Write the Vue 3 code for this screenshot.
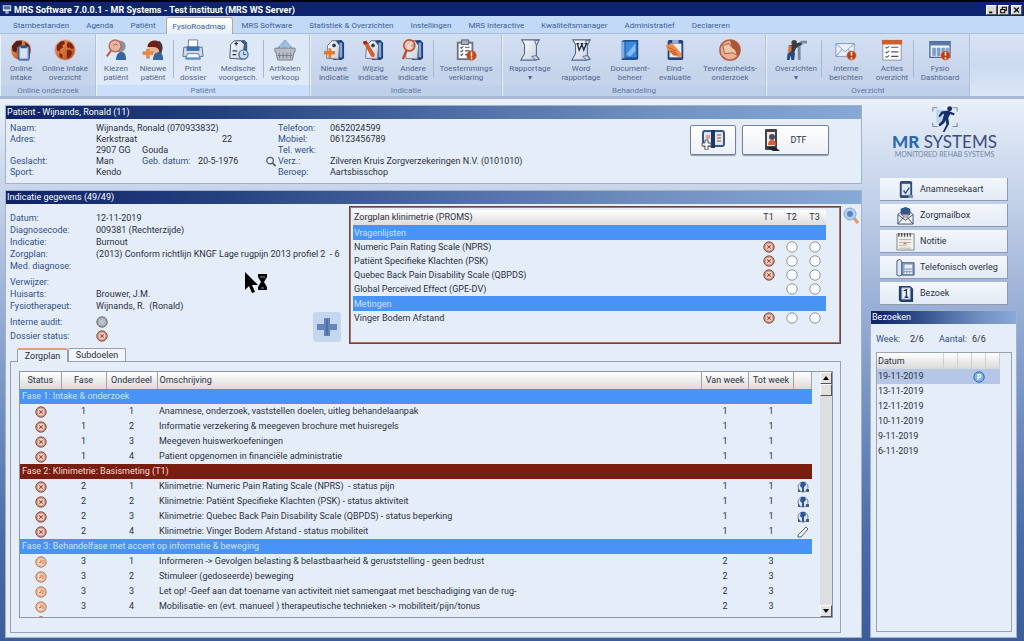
<script setup>
const menu = ['Stambestanden', 'Agenda', 'Patiënt', 'FysioRoadmap', 'MRS Software', 'Statistiek & Overzichten', 'Instellingen', 'MRS Interactive', 'Kwaliteitsmanager', 'Administratief', 'Declareren']

const groups = [
  { name: 'Online onderzoek', items: [
    { l: ['Online', 'intake'], icon: 'globe-clip', w: 34 }, { l: ['Online intake', 'overzicht'], icon: 'globe', w: 54 }] },
  { name: 'Patiënt', hot: true, items: [
    { l: ['Kiezen', 'patiënt'], icon: 'person-search', w: 32 }, { l: ['Nieuwe', 'patiënt'], icon: 'person-add', w: 42, sep: true },
    { l: ['Print', 'dossier'], icon: 'printer', w: 38 }, { l: ['Medische', 'voorgesch.'], icon: 'record', w: 52, sep: true },
    { l: ['Artikelen', 'verkoop'], icon: 'basket', w: 42 }] },
  { name: 'Indicatie', items: [
    { l: ['Nieuwe', 'indicatie'], icon: 'ind-new', w: 40 }, { l: ['Wijzig', 'indicatie'], icon: 'ind-edit', w: 38 },
    { l: ['Andere', 'indicatie'], icon: 'ind-other', w: 42, sep: true }, { l: ['Toestemmings', 'verklaring'], icon: 'consent', w: 64 }] },
  { name: 'Behandeling', items: [
    { l: ['Rapportage', '▾'], icon: 'scroll', w: 48 }, { l: ['Word', 'rapportage'], icon: 'scroll-w', w: 54 },
    { l: ['Document-', 'beheer'], icon: 'book', w: 44 }, { l: ['Eind-', 'evaluatie'], icon: 'eval', w: 46 },
    { l: ['Tevredenheids-', 'onderzoek'], icon: 'thumb', w: 64 }] },
  { name: 'Overzicht', items: [
    { l: ['Overzichten', '▾'], icon: 'trainer', w: 52, sep: true }, { l: ['Interne', 'berichten'], icon: 'mail', w: 48 },
    { l: ['Acties', 'overzicht'], icon: 'actions', w: 44, sep: true }, { l: ['Fysio', 'Dashboard'], icon: 'dash', w: 52 }] },
]

const proms = [
  { head: 'Vragenlijsten' },
  { name: 'Numeric Pain Rating Scale (NPRS)', done: true },
  { name: 'Patiënt Specifieke Klachten (PSK)', done: true },
  { name: 'Quebec Back Pain Disability Scale (QBPDS)', done: true },
  { name: 'Global Perceived Effect (GPE-DV)', done: false },
  { head: 'Metingen' },
  { name: 'Vinger Bodem Afstand', done: true },
]

const plan = [
  { head: 'Fase 1: Intake & onderzoek' },
  { s: 'st-x', f: 1, o: 1, t: 'Anamnese, onderzoek, vaststellen doelen, uitleg behandelaanpak', a: 1, b: 1 },
  { s: 'st-x', f: 1, o: 2, t: 'Informatie verzekering & meegeven brochure met huisregels', a: 1, b: 1 },
  { s: 'st-x', f: 1, o: 3, t: 'Meegeven huiswerkoefeningen', a: 1, b: 1 },
  { s: 'st-x', f: 1, o: 4, t: 'Patient opgenomen in financiële administratie', a: 1, b: 1 },
  { head: 'Fase 2: Klinimetrie: Basismeting (T1)', red: true },
  { s: 'st-x', f: 2, o: 1, t: 'Klinimetrie: Numeric Pain Rating Scale (NPRS)  - status pijn', a: 1, b: 1, i: 'globe-s' },
  { s: 'st-x', f: 2, o: 2, t: 'Klinimetrie: Patiënt Specifieke Klachten (PSK) - status aktiviteit', a: 1, b: 1, i: 'globe-s' },
  { s: 'st-x', f: 2, o: 3, t: 'Klinimetrie: Quebec Back Pain Disability Scale (QBPDS) - status beperking', a: 1, b: 1, i: 'globe-s' },
  { s: 'st-x', f: 2, o: 4, t: 'Klinimetrie: Vinger Bodem Afstand - status mobiliteit', a: 1, b: 1, i: 'ruler' },
  { head: 'Fase 3: Behandelfase met accent op informatie & beweging' },
  { s: 'st-o', f: 3, o: 1, t: 'Informeren -> Gevolgen belasting & belastbaarheid & geruststelling - geen bedrust', a: 2, b: 3 },
  { s: 'st-o', f: 3, o: 2, t: 'Stimuleer (gedoseerde) beweging', a: 2, b: 3 },
  { s: 'st-o', f: 3, o: 3, t: 'Let op! -Geef aan dat toename van activiteit niet samengaat met beschadiging van de rug-', a: 2, b: 3 },
  { s: 'st-o', f: 3, o: 4, t: 'Mobilisatie- en (evt. manueel ) therapeutische technieken -> mobiliteit/pijn/tonus', a: 2, b: 3 },
  { s: 'st-x', f: '', o: '', t: '', a: '', b: '' },
]

const actions = [
  { t: 'Anamnesekaart', icon: 'a-card' }, { t: 'Zorgmailbox', icon: 'a-mail' }, { t: 'Notitie', icon: 'a-note' },
  { t: 'Telefonisch overleg', icon: 'a-phone' }, { t: 'Bezoek', icon: 'a-visit' },
]
const visits = ['19-11-2019', '13-11-2019', '12-11-2019', '10-11-2019', '9-11-2019', '6-11-2019']
</script>

<template>
  <svg class="defs" aria-hidden="true">
    <defs>
      <linearGradient id="gOrange" x1="0" y1="0" x2="1" y2="1"><stop offset="0" stop-color="#f39a55" /><stop offset="1" stop-color="#b04a1e" /></linearGradient>
      <linearGradient id="gPaper" x1="0" y1="0" x2="1" y2="1"><stop offset="0" stop-color="#ffffff" /><stop offset="1" stop-color="#c3cede" /></linearGradient>
    </defs>
    <symbol id="globe" viewBox="0 0 24 24">
      <circle cx="12" cy="12" r="11" fill="url(#gOrange)" stroke="#c98a68" stroke-width=".6" />
      <path d="M3 7l4-4 4-1 1 3-3 2 1 2-3 2-1 3-3-2zM15 3l4 2 3 5-3 1-2-2-2 1-1-3zM14 12l4 0 2 3-2 4-3 3-1-4zM6 15l3 2 0 4-3-2z" fill="#7d2410" />
    </symbol>
    <symbol id="globe-clip" viewBox="0 0 24 24">
      <circle cx="12" cy="12" r="11" fill="url(#gOrange)" />
      <path d="M2 8l5-6 6 0 0 4-5 3-1 6-4-2zM16 3l5 4 1 6-4-2z" fill="#542018" />
      <rect x="9" y="8" width="12" height="15" rx="1.5" fill="#7ba0d2" stroke="#24447f" /><rect x="11" y="10" width="8" height="11" fill="#d7e4f5" /><path d="M12 7h6v3h-6z" fill="#33527f" />
    </symbol>
    <symbol id="person-search" viewBox="0 0 24 24">
      <path d="M12 23c0-6 3-9 6-9s5 3 5 9z" fill="#3565a5" /><circle cx="16" cy="8" r="6.500" fill="#8b90a0" />
      <circle cx="11" cy="7.500" r="6.500" fill="#e9b5a2" stroke="#b8705c" stroke-width="1.600" /><path d="M7 12l-5 7" stroke="#c45a32" stroke-width="2.200" /><path d="M9 7q2-3 5 0" fill="none" stroke="#995d50" />
    </symbol>
    <symbol id="person-add" viewBox="0 0 24 24">
      <path d="M12 23c0-6 3-9 6-9s5 3 5 9z" fill="#3565a5" /><circle cx="14" cy="9" r="6.500" fill="#e9b48f" /><path d="M6 9c0-10 17-10 16 2l-3 4c0-5-3-7-13-6z" fill="#702016" /><path d="M18 3q5 4 2 12" fill="none" stroke="#3c3c48" stroke-width="2.500" />
      <path d="M5 11h3v3h4v3H8v4H5v-4H1v-3h4z" fill="#f08a3c" stroke="#cf6425" stroke-width=".5" />
    </symbol>
    <symbol id="printer" viewBox="0 0 24 24">
      <path d="M7 1h10v10H7z" fill="#fff" stroke="#667896" /><path d="M2 9h20l1 10H1z" fill="#d2dae8" stroke="#57698a" /><path d="M5 8h14v5H5z" fill="#3d6fae" /><path d="M6 16h12l2 6H4z" fill="#fafdff" stroke="#5277ab" /><path d="M4 20h16v2H4z" fill="#5590da" />
    </symbol>
    <symbol id="record" viewBox="0 0 24 24">
      <path d="M8 2l11-1 3 3v14l-4 3H9z" fill="#3e5d8d" /><path d="M4 6l4-4h7l4 4-2 16-14-1z" fill="url(#gPaper)" stroke="#465064" /><path d="M8 5h4M10 3v4M6 13h5M6 17h4" stroke="#283c64" stroke-width="1.500" /><circle cx="18" cy="17" r="5" fill="#c8dbf0" stroke="#3d67a4" stroke-width="1.300" /><path d="M18 14v3h3" stroke="#315b98" fill="none" />
    </symbol>
    <symbol id="basket" viewBox="0 0 24 24">
      <path d="M4 11L12 2l8 9" fill="none" stroke="#7895c1" stroke-width="2" /><path d="M5 8l7-6 7 6-7 3z" fill="#9bbadf" /><path d="M1 10h22v4h-1l-2 9H4l-2-9H1z" fill="#b7bcc5" stroke="#777d88" /><path d="M6 15v6M10 15v6M14 15v6M18 15v6M4 18h16" stroke="#777d88" />
    </symbol>
    <symbol id="ind-base" viewBox="0 0 24 24">
      <path d="M9 2l11-1 3 3v17l-3 2h-9z" fill="#1d3f7a" /><path d="M18 4h3v16h-3z" fill="#87a9da" /><path d="M5 7l5-5h4l4 5-1 15-13-1z" fill="url(#gPaper)" stroke="#6e7380" /><circle cx="12" cy="7" r="2" fill="#303c58" />
    </symbol>
    <symbol id="ind-new" viewBox="0 0 24 24"><use href="#ind-base" /><path d="M6 10h3v3h4v4H9v4H6v-4H1v-4h5z" fill="#ee752e" /></symbol>
    <symbol id="ind-edit" viewBox="0 0 24 24"><use href="#ind-base" /><path d="M1 3l4-1 9 15-1 3-3-1z" fill="#dc592b" /><path d="M1 3l4-1 1 3-4 1z" fill="#8b2b18" /></symbol>
    <symbol id="ind-other" viewBox="0 0 24 24"><use href="#ind-base" /><circle cx="8" cy="7" r="6" fill="#f2cbb9" fill-opacity=".75" stroke="#c4512c" stroke-width="1.800" /><path d="M5 12l-4 10" stroke="#c4512c" stroke-width="2.500" /></symbol>
    <symbol id="consent" viewBox="0 0 24 24">
      <rect x="2" y="3" width="18" height="20" fill="#6d737d" /><path d="M4 5h14v16H4z" fill="#fafafa" /><path d="M7 1h8v5H7z" fill="#a8afba" stroke="#4f5968" /><path d="M6 9l1 1 2-2M6 13l1 1 2-2M6 17l1 1 2-2M11 9h5M11 13h5M11 17h3" fill="none" stroke="#505866" stroke-width="1.200" /><circle cx="18" cy="18" r="5.500" fill="#c24c1d" /><path d="M18 14v5M18 20v2" stroke="#fff" stroke-width="1.500" />
    </symbol>
    <symbol id="scroll" viewBox="0 0 24 24"><path d="M3 1h19l-3 6v11l3 4-4 1H2l4-7V6z" fill="url(#gPaper)" stroke="#53698d" stroke-width="1.200" /><path d="M19 18l-5 1 4 4M22 1l-5 1 2 5" fill="none" stroke="#53698d" /></symbol>
    <symbol id="scroll-w" viewBox="0 0 24 24"><use href="#scroll" /><path d="M8 5l2 7 3-6 2 6 3-7M7 5h3M11.500 5h3M16 5h3" fill="none" stroke="#222c42" stroke-width="1.500" /></symbol>
    <symbol id="book" viewBox="0 0 24 24"><path d="M3 2l3-1h15v21l-3 1H3z" fill="#1d4f92" /><path d="M7 3h12v17H7z" fill="#3d8be0" /><path d="M8 17L18 5v8l-6 6z" fill="#89bbf0" /><path d="M3 3h3v18H3z" fill="#7faee2" /></symbol>
    <symbol id="eval" viewBox="0 0 24 24"><rect x="4" y="1" width="17" height="22" rx="2" fill="#23427a" /><path d="M6 5h13v15H6z" fill="#e7eef8" /><path d="M9 1h7v4H9z" fill="#9aaed0" /><path d="M2 7l7-2 4 4 6 7-1 4-8-2-6-6z" fill="#f08a46" /><path d="M4 9l9 4M6 13l7 2M9 16l6 1" stroke="#b64e20" /></symbol>
    <symbol id="thumb" viewBox="0 0 24 24"><circle cx="12" cy="12" r="11" fill="#e7b398" stroke="#b95d39" stroke-width="1.600" /><path d="M12 1a11 11 0 0 1 9 17l-6-4z" fill="#a8573a" /><path d="M4 7l7-2 3 4 4 3 2 6-5-3-9 1z" fill="#efc5aa" stroke="#a45737" /></symbol>
    <symbol id="trainer" viewBox="0 0 24 24"><circle cx="10" cy="4" r="3" fill="#493c3a" /><path d="M4 7l5-1 9-3 1 3-7 4-2 5-5 1z" fill="#343c4a" /><path d="M4 7h3v7H3z" fill="#e37535" /><path d="M3 15h8l-1 8H7l-1-5-1 5H2z" fill="#264b7e" /><path d="M14 8h3v15h-3zM17 2h7v3h-7z" fill="#7788a5" /></symbol>
    <symbol id="bang" viewBox="0 0 24 24"><circle cx="18" cy="18" r="5.200" fill="#b84014" stroke="#e6a184" stroke-width=".7" /><path d="M18 14v4M18 20v2" stroke="#fff" stroke-width="1.700" /></symbol>
    <symbol id="mail" viewBox="0 0 24 24"><path d="M1 5h20v14H1z" fill="#eaf1fa" stroke="#7896c5" /><path d="M1 5l10 9L21 5M1 19l7-8M21 19l-7-8" fill="none" stroke="#7896c5" /><use href="#bang" /></symbol>
    <symbol id="actions" viewBox="0 0 24 24"><path d="M2 2h20v21H2z" fill="#fff" stroke="#8e8e93" /><path d="M1 1h22v5H1z" fill="#cb602f" /><path d="M5 9l1 1 3-2M5 14l1 1 3-2M5 19l1 1 3-2M11 9h8M11 14h8M11 19h8" fill="none" stroke="#515862" stroke-width="1.200" /></symbol>
    <symbol id="dash" viewBox="0 0 24 24"><path d="M1 3h22v17H1z" fill="#e8f0fa" stroke="#496791" stroke-width="1.400" /><path d="M1 3h22v4H1z" fill="#5979a8" /><path d="M4 10h3v8H4zM9 10h3v8H9zM14 10h3v8h-3zM19 10h2v4h-2z" fill="#7ba2d8" stroke="#53719e" stroke-width=".5" /><use href="#bang" /></symbol>
    <symbol id="st-x" viewBox="0 0 12 12"><circle cx="6" cy="6" r="5.200" fill="#cf9584" stroke="#8e5040" /><circle cx="6" cy="6" r="3.200" fill="#f1dcd4" /><path d="M4.300 4.300l3.400 3.400M7.700 4.300L4.300 7.700" stroke="#a84c33" stroke-width="1.200" /></symbol>
    <symbol id="st-o" viewBox="0 0 12 12"><circle cx="6" cy="6" r="5.200" fill="#f3b795" stroke="#b87a60" /><circle cx="6" cy="6" r="3.200" fill="#f8dccb" /><path d="M6 3.500V6.500h-2M8 4v4" stroke="#cf6a38" fill="none" /></symbol>
    <symbol id="st-w" viewBox="0 0 12 12"><circle cx="6" cy="6" r="5.200" fill="#fcfdfe" stroke="#858b94" stroke-width=".9" /></symbol>
    <symbol id="st-g" viewBox="0 0 12 12"><circle cx="6" cy="6" r="5.200" fill="#a9adb4" stroke="#6a6e77" /><circle cx="6" cy="6" r="3" fill="#bfc3c9" /></symbol>
    <symbol id="globe-s" viewBox="0 0 12 12"><circle cx="6" cy="6" r="5" fill="#dfe9f6" stroke="#7084a8" /><path d="M4 1h4l1 3-2 2v5H5V7L3 5z" fill="#2c579e" /><path d="M1 7l3 4H1zM9 8h3v3H9z" fill="#4c5a76" /></symbol>
    <symbol id="ruler" viewBox="0 0 12 12"><path d="M1 9l8-8 2 2-7 8H1z" fill="#f4f6f9" stroke="#565b66" /></symbol>
    <symbol id="a-card" viewBox="0 0 20 20"><rect x="4" y="1" width="13" height="18" rx="2" fill="#314c7c" /><path d="M6 4h9v12H6z" fill="#dfe8f5" /><path d="M8 11l2 3 4-6" fill="none" stroke="#31518a" stroke-width="1.500" /><path d="M13 15l5 1v3h-5z" fill="#7b93ba" /></symbol>
    <symbol id="a-mail" viewBox="0 0 20 20"><path d="M2 9l8-7 8 7v10H2z" fill="#eef1f5" stroke="#3d4f6d" /><path d="M5 3l5-2 5 2v6l-5 4-5-4z" fill="#31558c" /><path d="M6 9h8l-4 4z" fill="#eaab82" /><path d="M2 19l6-7M18 19l-6-7M2 9l8 6 8-6" fill="none" stroke="#3d4f6d" /></symbol>
    <symbol id="a-note" viewBox="0 0 20 20"><path d="M1 2h18v17H1z" fill="#f4f1ea" stroke="#80858e" /><path d="M3 1v4M6 1v4M9 1v4M12 1v4M15 1v4" stroke="#444b57" stroke-width="1.300" /><path d="M3 8h13M3 11h13M3 14h8M3 17h13" stroke="#b1b0ae" /><path d="M8 12h3" stroke="#df8754" stroke-width="2" /></symbol>
    <symbol id="a-phone" viewBox="0 0 20 20"><path d="M6 5h13v13H6z" fill="#8ea5c8" stroke="#3c5277" /><path d="M1 3q3-3 5 0v15q-3 2-5 0z" fill="#dce7f5" stroke="#40597f" /><path d="M9 7h8v4H9z" fill="#e8f1fb" /><path d="M9 13h2M12 13h2M15 13h2M9 16h2M12 16h2M15 16h2" stroke="#fff" stroke-width="1.500" /></symbol>
    <symbol id="a-visit" viewBox="0 0 20 20"><path d="M3 2h12l3 3v14H5l-2-2z" fill="#263f6d" /><path d="M6 4h9v12H6z" fill="#f2f5fa" stroke="#7592c2" /><path d="M8 7l3-1v8M9 14h4" fill="none" stroke="#2c3c59" stroke-width="1.500" /></symbol>
    <symbol id="lens" viewBox="0 0 12 12"><circle cx="5" cy="5" r="3.600" fill="#e7eef7" stroke="#53586a" stroke-width="1.400" /><path d="M8 8l3 3" stroke="#53586a" stroke-width="2" /></symbol>
  </svg>

  <div class="app">
    <header class="title">
      <svg class="title-icon" viewBox="0 0 12 12"><path d="M1 1h10v7H1z" fill="#e6ecf5" /><path d="M2 2h8v4H2z" fill="#536fa6" /><path d="M4 8h4v3H4z" fill="#aeb9ce" /></svg>
      <h1>MRS Software 7.0.0.1 - MR Systems - Test instituut (MRS WS Server)</h1>
      <div class="win">
        <button aria-label="Minimaliseren"><svg viewBox="0 0 10 10"><path d="M2 8h4" stroke="#000" stroke-width="2" /></svg></button>
        <button aria-label="Herstellen"><svg viewBox="0 0 10 10"><path d="M3.500 4V1.500h5v4H7M1.500 4.500h5v4h-5z" fill="none" stroke="#000" stroke-width="1.300" /></svg></button>
        <button aria-label="Sluiten"><svg viewBox="0 0 10 10"><path d="M2 2l6 6M8 2L2 8" stroke="#000" stroke-width="1.600" /></svg></button>
      </div>
    </header>

    <nav class="menu">
      <button v-for="m in menu" :key="m" :class="{ active: m === 'FysioRoadmap' }">{{ m }}</button>
    </nav>

    <div class="ribbon">
      <section v-for="g in groups" :key="g.name" class="group" :class="{ hot: g.hot }">
        <div class="tools">
          <button v-for="it in g.items" :key="it.icon" class="tool" :class="{ sep: it.sep }" :style="{ width: it.w + 'px' }">
            <svg><use :href="'#' + it.icon" /></svg>
            <span>{{ it.l[0] }}</span>
            <span>{{ it.l[1] }}</span>
          </button>
        </div>
        <div class="caption">{{ g.name }}</div>
      </section>
    </div>

    <div class="work">
      <main class="left">
        <section class="panel">
          <h2>Patiënt - Wijnands, Ronald (11)</h2>
          <div class="patient">
            <dl class="fields">
              <dt>Naam:</dt><dd>Wijnands, Ronald (070933832)</dd>
              <dt>Adres:</dt><dd><span class="street">Kerkstraat</span>22</dd>
              <dt></dt><dd><span class="short">2907 GG</span>Gouda</dd>
              <dt>Geslacht:</dt><dd><span class="short">Man</span><span class="lab">Geb. datum:</span>20-5-1976</dd>
              <dt>Sport:</dt><dd>Kendo</dd>
            </dl>
            <dl class="fields contact">
              <dt>Telefoon:</dt><dd>0652024599</dd>
              <dt>Mobiel:</dt><dd>06123456789</dd>
              <dt>Tel. werk:</dt><dd></dd>
              <dt class="with-lens"><button class="lens" aria-label="Zoek verzekeraar"><svg><use href="#lens" /></svg></button>Verz.:</dt><dd>Zilveren Kruis Zorgverzekeringen N.V. (0101010)</dd>
              <dt>Beroep:</dt><dd>Aartsbisschop</dd>
            </dl>
            <div class="pbtns">
              <button class="big" aria-label="Kaart toevoegen">
                <svg class="card-ic" viewBox="0 0 24 20"><rect x="2" y="1" width="21" height="15" rx="2" fill="#dce6f5" stroke="#35578d" stroke-width="2" /><path d="M12 0v18" stroke="#1c3665" stroke-width="4" /><path d="M16 5h4M16 8h4M16 11h4" stroke="#c97b52" stroke-width="1.500" /><path d="M5 5h4v4H5z" fill="#e2a281" /><path d="M4 10h3v3h3v3H7v4H4v-4H1v-3h3z" fill="#f3f3f3" stroke="#555b66" /></svg>
              </button>
              <button class="big dtf">
                <svg class="dtf-ic" viewBox="0 0 16 24"><rect x="1" y="1" width="12" height="21" rx="1" fill="#43434d" /><path d="M3 4h8v14H3z" fill="#f1e9e5" /><circle cx="8" cy="9" r="3" fill="#4c4d58" /><path d="M4 17q0-5 4-5t4 5z" fill="#d95e36" /><path d="M2 19h9l5 4H9z" fill="#22242c" /></svg>
                DTF
              </button>
            </div>
          </div>
        </section>

        <section class="panel grow">
          <h2>Indicatie gegevens (49/49)</h2>
          <div class="indic">
            <div class="ind-data">
              <dl class="fields ind">
                <dt>Datum:</dt><dd>12-11-2019</dd>
                <dt>Diagnosecode:</dt><dd>009381 (Rechterzijde)</dd>
                <dt>Indicatie:</dt><dd>Burnout</dd>
                <dt>Zorgplan:</dt><dd>(2013) Conform richtlijn KNGF Lage rugpijn 2013 profiel 2&nbsp; - 6</dd>
                <dt>Med. diagnose:</dt><dd></dd>
              </dl>
              <dl class="fields ind">
                <dt>Verwijzer:</dt><dd></dd>
                <dt>Huisarts:</dt><dd>Brouwer, J.M.</dd>
                <dt>Fysiotherapeut:</dt><dd>Wijnands, R.&nbsp; (Ronald)</dd>
              </dl>
              <dl class="fields ind marks">
                <dt>Interne audit:</dt><dd><svg class="st"><use href="#st-g" /></svg></dd>
                <dt>Dossier status:</dt><dd><svg class="st"><use href="#st-x" /></svg></dd>
              </dl>
              <button class="plus" aria-label="Toevoegen"><svg viewBox="0 0 28 28"><path d="M11 5h6v6h7v6h-7v6h-6v-6H4v-6h7z" fill="#6385b9" /><path d="M13 6h2v16h-2z" fill="#4d70a8" /></svg></button>
              <svg class="cursor" viewBox="0 0 24 24"><path d="M1 1v18l4-4 3 7 3-1-3-7h6z" fill="#000" /><path d="M14 3h9v3l-3 5 3 5v3h-9v-3l3-5-3-5z" fill="#000" /><path d="M16 6h5M17 17h3" stroke="#8792a5" /></svg>
            </div>
            <div class="proms">
              <table>
                <colgroup><col><col class="ct"><col class="ct"><col class="ct"></colgroup>
                <thead><tr><th>Zorgplan klinimetrie (PROMS)</th><th>T1</th><th>T2</th><th>T3</th></tr></thead>
                <tbody>
                  <tr v-for="p in proms" :key="p.head || p.name" :class="{ bar: p.head }">
                    <td v-if="p.head" colspan="4">{{ p.head }}</td>
                    <template v-else>
                      <td>{{ p.name }}</td>
                      <td><svg v-if="p.done" class="st"><use href="#st-x" /></svg></td>
                      <td><svg class="st"><use href="#st-w" /></svg></td>
                      <td><svg class="st"><use href="#st-w" /></svg></td>
                    </template>
                  </tr>
                </tbody>
              </table>
            </div>
            <button class="find" aria-label="Zoeken"><svg viewBox="0 0 18 18"><path d="M11 10l5 6" stroke="#e0976b" stroke-width="3" /><circle cx="8" cy="7" r="6" fill="#b9cfee" stroke="#8aa8d4" /><circle cx="8" cy="7" r="3" fill="#5685c5" /></svg></button>
          </div>

          <div class="tabs"><button class="on">Zorgplan</button><button>Subdoelen</button></div>
          <div class="tabbody">
            <div class="planbox">
              <div class="planscroll">
                <table class="plan">
                  <colgroup><col class="c1"><col class="c2"><col class="c3"><col><col class="c5"><col class="c6"><col class="c7"></colgroup>
                  <thead><tr><th>Status</th><th>Fase</th><th>Onderdeel</th><th class="om">Omschrijving</th><th>Van week</th><th>Tot week</th><th></th></tr></thead>
                  <tbody>
                    <tr v-for="(r, n) in plan" :key="n" :class="{ bar: r.head, red: r.red }">
                      <td v-if="r.head" colspan="7">{{ r.head }}</td>
                      <template v-else>
                        <td><svg class="st"><use :href="'#' + r.s" /></svg></td>
                        <td>{{ r.f }}</td><td>{{ r.o }}</td><td class="om">{{ r.t }}</td><td>{{ r.a }}</td><td>{{ r.b }}</td>
                        <td><svg v-if="r.i" class="st"><use :href="'#' + r.i" /></svg></td>
                      </template>
                    </tr>
                  </tbody>
                </table>
              </div>
              <div class="sbar">
                <button aria-label="Omhoog"><svg viewBox="0 0 8 8"><path d="M4 2l3 4H1z" /></svg></button>
                <div class="thumb"></div>
                <button class="down" aria-label="Omlaag"><svg viewBox="0 0 8 8"><path d="M4 6l3-4H1z" /></svg></button>
              </div>
            </div>
          </div>
        </section>
      </main>

      <aside class="right">
        <div class="logo">
          <svg viewBox="0 0 30 30"><path d="M2 7V3h5M23 3h5v4M2 19v4h5M23 23h5v-4" fill="none" stroke="#7b8caf" stroke-width="1.200" /><path d="M5 5h10l-3 14H6z" fill="#9ec1ea" opacity=".5" /><circle cx="20" cy="4" r="2.600" fill="#152c62" /><path d="M18 6l-7 1-3 5 1.500 1L13 9.500l1 .5-2 7-4 4 1.500 2 5-4 1-3 1 5-4 8h2l5-9-1-6 2-4 4 1 1-2-5-2z" fill="#17306b" /></svg>
          <div class="brand"><b>MR</b> SYSTEMS</div>
          <div class="sub">MONITORED REHAB SYSTEMS</div>
        </div>
        <div class="acts">
          <button v-for="a in actions" :key="a.t"><svg><use :href="'#' + a.icon" /></svg>{{ a.t }}</button>
        </div>
        <section class="panel grow visits">
          <h2>Bezoeken</h2>
          <div class="vbody">
            <p><span class="lab wk">Week:</span><span class="val">2/6</span><span class="lab">Aantal:</span><span>6/6</span></p>
            <div class="vlist">
              <table>
                <colgroup><col><col class="n"><col class="n"><col class="n"><col class="n"></colgroup>
                <thead><tr><th>Datum</th><th></th><th></th><th></th><th></th></tr></thead>
                <tbody>
                  <tr v-for="(v, n) in visits" :key="v" :class="{ sel: n === 0 }">
                    <td>{{ v }}</td><td></td><td></td>
                    <td><svg v-if="n === 0" class="st" viewBox="0 0 12 12"><circle cx="6" cy="6" r="5.200" fill="#7fb4ee" stroke="#2f68b6" /><path d="M5 9V3.500h2.500v3H5" fill="none" stroke="#fff" stroke-width="1.200" /></svg></td><td></td>
                  </tr>
                </tbody>
              </table>
            </div>
          </div>
        </section>
      </aside>
    </div>
  </div>
</template>

<style>
html, body { margin: 0; }
</style>

<style scoped>
.defs { position: absolute; width: 0; height: 0; }
.app {
  box-sizing: border-box; min-height: 100vh; display: flex; flex-direction: column;
  font: 9px/11px Roboto, "Liberation Sans", sans-serif; color: #2b3142;
  background: linear-gradient(#e9f0f9 100px, #d0dcef 160px, #c3d1e9 200px, #98aed5 310px, #6f8dc0 420px, #4a6ba8 540px, #3d5d9a 641px);
}
button { font: inherit; color: inherit; margin: 0; padding: 0; border: 0; background: none; }
svg { display: block; }
h1, h2, dl, dd, dt, p { margin: 0; }
table { width: 100%; border-collapse: collapse; table-layout: fixed; }
th, td { padding: 0; font-weight: 400; text-align: center; white-space: pre; overflow: hidden; }
th:first-child { text-align: left; }

.title { display: flex; align-items: center; height: 16px; padding: 1px 2px 0; border-top: 2px solid #02030f; box-sizing: border-box; background: #0d2470; gap: 2px; }
.title-icon { width: 10px; height: 11px; }
.title h1 { flex: 1; font-size: 9px; line-height: 12px; font-weight: 700; color: #fff; }
.win { display: flex; gap: 1px; }
.win button { width: 11px; height: 10px; background: #dcdad5; border: 1px solid; border-color: #fff #555 #555 #fff; box-sizing: border-box; }
.win button:last-child { margin-left: 1px; }
.win svg { width: 9px; height: 8px; }

.menu { display: flex; height: 17px; padding-left: 5px; background: #c3d9f8; border-bottom: 1px solid #a9bedf; font-size: 8px; color: #3f5f98; }
.menu button { padding: 2px 6px 0; margin: 0 3px 0 2px; white-space: nowrap; }
.menu .active { margin: 1px 1px -1px; padding: 1px 6px 0; background: linear-gradient(#fff, #e5eefa); border: 1px solid #b9a88e; border-bottom: 0; border-radius: 3px 3px 0 0; }

.ribbon { display: flex; height: 62px; background: linear-gradient(#d8e3f4, #ccdaf0 50%, #dce8f8); border-bottom: 3px solid #a9b9d8; font-size: 8px; line-height: 9px; color: #53678f; }
.group { display: flex; flex-direction: column; padding: 0 3px; border-right: 1px solid #b2c1db; background: linear-gradient(#d3dff2, #c5d3eb 70%, #cbd9ef); border-left: 1px solid #e9f1fb; }
.group.hot { background: linear-gradient(#dde8f7, #dfe9f8); }
.tools { display: flex; flex: 1; }
.tool { display: flex; flex-direction: column; align-items: center; padding-top: 5px; box-sizing: border-box; white-space: nowrap; }
.tool.sep { position: relative; }
.tool.sep::after { content: ""; position: absolute; right: 0; top: 6px; width: 1px; height: 38px; background: #a9b8d2; }
.tool svg { width: 22px; height: 22px; margin-bottom: 3px; }
.caption { height: 11px; line-height: 11px; text-align: center; background: #bfd0ea; color: #6179a8; margin: 0 -3px; }
.hot .caption { background: #cbdffa; }

.work { flex: 1; display: flex; gap: 8px; padding: 6px 7px 5px 5px; }
.left { flex: 1; min-width: 0; display: flex; flex-direction: column; gap: 6px; }
.right { width: 147px; display: flex; flex-direction: column; }
.panel { display: flex; flex-direction: column; background: #e5edf8; border: 1px solid #a5b1c6; box-sizing: border-box; }
.panel.grow { flex: 1; }
h2 { font-size: 9px; line-height: 13px; font-weight: 400; color: #fff; padding-left: 1px; background: linear-gradient(90deg, #0d2268, #24417f 25%, #4a6aa3 50%, #6f8fc0 75%, #87a9d8); }
.fields { display: grid; grid-template-columns: 86px auto; grid-auto-rows: 11px; line-height: 11px; align-content: start; }
.fields dt, .lab { color: #30508c; }
.fields dd { white-space: nowrap; }
.patient { display: flex; align-items: flex-start; padding: 4px 32px 5px 4px; }
.patient .fields { width: 268px; }
.patient .contact { flex: 1; grid-template-columns: 52px auto; }
.fields span { display: inline-block; }
.street { width: 126px; }
.short { width: 46px; }
.short + .lab { width: 56px; }
.with-lens { position: relative; }
.lens { position: absolute; left: -13px; top: 0; }
.lens svg { width: 12px; height: 11px; }
.pbtns { display: flex; gap: 6px; padding-top: 2px; }
.big { display: flex; align-items: center; justify-content: center; gap: 10px; width: 46px; height: 30px; background: linear-gradient(#fff, #eceff4); border: 1px solid #74819a; border-radius: 2px; box-shadow: 0 1px 1px #8e9ab0; }
.dtf { width: 87px; }
.card-ic { width: 24px; height: 20px; }
.dtf-ic { width: 16px; height: 24px; }

.indic { position: relative; display: flex; padding: 2px 20px 4px 4px; }
.ind-data { position: relative; flex: 1; min-width: 0; padding-top: 6px; }
.ind { grid-auto-rows: 12px; line-height: 12px; margin-bottom: 4px; }
.marks { row-gap: 2px; margin: 0; }
.st { width: 12px; height: 12px; margin: 0 auto; }
dd .st { margin: 0; }
.plus { position: absolute; right: 8px; bottom: 2px; width: 28px; height: 30px; border-radius: 3px; background: #c5d6ef; }
.plus svg { width: 28px; height: 28px; }
.cursor { position: absolute; left: 234px; top: 65px; width: 24px; height: 24px; }
.proms { width: 486px; min-height: 132px; padding: 2px 1px 0; border: 2px solid #ad7464; outline: 1px solid #5d4a4c; outline-offset: -1px; }
.proms table { width: 473px; margin-left: 1px; }
.proms .ct { width: 23px; }
.proms th { height: 15px; background: linear-gradient(#fff, #dcdcdc); }
.proms td { height: 14px; line-height: 14px; }
.proms td:first-child, .vlist td:first-child { text-align: left; padding-left: 1px; }
.proms th:first-child { padding-left: 1px; }
.bar td { height: 15px; background: #4893f5; color: #cfe3ff; text-align: left; padding-left: 2px; }
.red td { background: #781d10; color: #f6ded8; }
.find { position: absolute; right: 1px; top: 3px; }
.find svg { width: 18px; height: 18px; }

.tabs { display: flex; padding-left: 11px; position: relative; z-index: 1; margin-bottom: -1px; }
.tabs button { height: 14px; width: 58px; background: #f1f4f9; border: 1px solid #97a0b0; border-bottom: 0; border-radius: 2px 2px 0 0; box-sizing: border-box; line-height: 12px; }
.tabs button:not(.on) { margin-bottom: 1px; height: 13px; }
.tabs .on { width: 51px; border-top: 2px solid #e59a78; background: #e8eff9; }
.tabbody { flex: 1; display: flex; margin: 0 20px 4px 4px; padding: 9px 7px 14px 8px; border: 1px solid #98a2b3; box-sizing: border-box; }
.planbox { flex: 1; display: flex; min-width: 0; height: 247px; border: 1px solid #8f97a5; box-sizing: border-box; overflow: hidden; }
.planscroll { flex: 1; overflow: hidden; }
.c1 { width: 41px; } .c2 { width: 45px; } .c3 { width: 51px; } .c5 { width: 47px; } .c6 { width: 45px; } .c7 { width: 18px; }
.plan th { height: 17px; text-align: center; background: linear-gradient(#fff, #d9dadb); border-right: 1px solid #9fa3aa; box-sizing: border-box; }
.plan td { height: 15px; line-height: 15px; }
.plan .om { text-align: left; padding-left: 2px; }
.plan .bar td { text-align: left; }
.sbar { display: flex; flex-direction: column; width: 12px; margin-left: 8px; background: #dedfe1; }
.sbar button, .thumb { height: 12px; box-sizing: border-box; background: #e3e2df; border: 1px solid; border-color: #fff #555 #555 #fff; }
.sbar svg { width: 8px; height: 8px; margin: 0 auto; }
.sbar .down { margin-top: auto; }

.logo { display: flex; flex-direction: column; align-items: center; color: #3a4d80; padding-left: 2px; }
.logo svg { width: 28px; height: 28px; }
.brand { font: 17px/17px Lato, sans-serif; white-space: nowrap; }
.brand b { color: #2e69ae; font-weight: 900; }
.sub { font: 7px/8px Lato, sans-serif; color: #7385a9; white-space: nowrap; }
.acts { display: flex; flex-direction: column; gap: 3px; margin: 20px 9px 5px 10px; }
.acts button { display: flex; align-items: center; gap: 5px; height: 23px; padding-left: 16px; background: linear-gradient(#f4f7fc, #e4ebf6); border-right: 1px solid #8d9ab3; border-bottom: 1px solid #8d9ab3; white-space: nowrap; }
.acts svg { width: 19px; height: 19px; }
.vbody { flex: 1; display: flex; flex-direction: column; padding: 10px 4px 5px 5px; }
.vbody p { display: flex; margin-bottom: 7px; gap: 5px; }
.vbody .wk { width: 29px; }
.val { width: 24px; }
.vlist { flex: 1; border: 1px solid #98a2b3; }
.vlist table { width: 123px; }
.vlist .n { width: 14px; }
.vlist th { height: 16px; padding-left: 1px; background: linear-gradient(#fff, #d8d9da); border-right: 1px solid #d0d0d0; box-sizing: border-box; }
.vlist td { height: 15px; }
.sel td { background: #b5c6e6; }
.sel .st { width: 12px; }
</style>
